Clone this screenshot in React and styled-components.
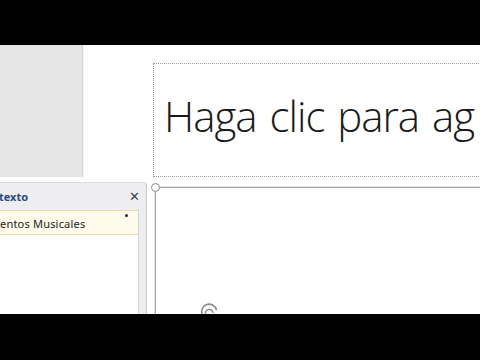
import React from "react";
import styled, { createGlobalStyle } from "styled-components";

const Global = createGlobalStyle`
  html, body { margin: 0; padding: 0; background: #000; }
  #root { width: 480px; height: 360px; overflow: hidden; }
`;

const Frame = styled.div`
  width: 480px;
  height: 360px;
  display: flex;
  flex-direction: column;
  background: #000;
  font-family: "Open Sans", "Noto Sans", sans-serif;
`;

const Letterbox = styled.div`
  height: ${(p) => p.$h}px;
  flex: none;
  background: #000;
`;

const Workspace = styled.div`
  position: relative;
  height: 269px;
  flex: none;
  display: flex;
  background: #fff;
  overflow: hidden;
`;

const ThumbPane = styled.div`
  width: 82px;
  height: 132px;
  flex: none;
  background: #e6e6e6;
  border-right: 1px solid #d6d6d6;
  box-shadow: 1px 0 0 #f2f2f2;
`;

const Canvas = styled.div`
  flex: 1;
  display: flex;
  flex-direction: column;
  padding: 18px 0 0 70px;
  min-width: 0;
`;

const TitleBox = styled.div`
  height: 112px;
  width: 360px;
  flex: none;
  border: 1px dotted #9a9a9a;
  display: flex;
  align-items: center;
  padding-left: 10px;
  box-sizing: content-box;
`;

const TitleText = styled.div`
  font-family: "Open Sans", sans-serif;
  font-weight: 300;
  font-size: 42px;
  color: #1a1a1a;
  white-space: nowrap;
  letter-spacing: -1px;
  word-spacing: 3px;
  margin-top: -9px;
`;

const ContentBox = styled.div`
  position: relative;
  margin-top: 10px;
  margin-left: 2px;
  flex: 1;
  border-top: 1px solid #a9a9a9;
  border-left: 1px solid #a9a9a9;
  box-shadow: 0 -1px 0 #e4e4e4, -1px 0 0 #e4e4e4;
`;

const Handle = styled.div`
  position: absolute;
  left: -5px;
  top: -5px;
  width: 7px;
  height: 7px;
  border: 1.5px solid #8a8a8a;
  border-radius: 50%;
  background: #fff;
`;

const RotateIcon = styled.svg`
  position: absolute;
  left: 42px;
  top: 112px;
`;

const TextPane = styled.div`
  position: absolute;
  left: 0;
  top: 137px;
  width: 146px;
  bottom: -4px;
  background: #eeeef1;
  border-right: 1px solid #c8c8cc;
  border-top: 1px solid #dcdce0;
  border-top-right-radius: 4px;
  display: flex;
  flex-direction: column;
`;

const PaneHeader = styled.div`
  height: 27px;
  flex: none;
  display: flex;
  align-items: center;
  justify-content: space-between;
  padding-right: 6px;
`;

const PaneTitle = styled.span`
  font-family: "Noto Sans", "Open Sans", sans-serif;
  font-weight: 700;
  font-size: 11px;
  color: #2c4a78;
  margin-left: -1px;
`;

const CloseBtn = styled.span`
  font-family: "DejaVu Sans", sans-serif;
  font-size: 13px;
  color: #444;
  line-height: 1;
`;

const PaneBody = styled.div`
  flex: 1;
  width: 138px;
  background: #fff;
  border-right: 1px solid #d4d4d8;
  display: flex;
  flex-direction: column;
`;

const BulletRow = styled.div`
  position: relative;
  height: 25px;
  box-sizing: border-box;
  background: #fffbea;
  border-top: 1px solid #e9dca8;
  border-bottom: 1px solid #e9dca8;
  display: flex;
  align-items: center;
  font-family: "Noto Sans", "Open Sans", sans-serif;
  font-size: 11px;
  letter-spacing: 0.2px;
  color: #222;
  padding-top: 2px;
`;

const Dot = styled.span`
  position: absolute;
  right: 10px;
  top: 3px;
  width: 3px;
  height: 3px;
  border-radius: 50%;
  background: #1c2a4a;
`;

export default function App() {
  return (
    <>
      <Global />
      <Frame>
        <Letterbox $h={45} />
        <Workspace>
          <ThumbPane />
          <Canvas>
            <TitleBox>
              <TitleText>Haga clic para ag</TitleText>
            </TitleBox>
            <ContentBox>
              <Handle />
              <RotateIcon width="24" height="24" viewBox="0 0 24 24">
                <path
                  d="M18.5 10A7.5 7.5 0 1 0 16.5 17"
                  fill="none"
                  stroke="#8a8a8a"
                  strokeWidth="1.6"
                />
                <path
                  d="M15 13A3.8 3.8 0 1 0 13 16.5"
                  fill="none"
                  stroke="#8a8a8a"
                  strokeWidth="1.4"
                />
                <path d="M16 13.5l4.5 2-3.5 3.5z" fill="#8a8a8a" />
              </RotateIcon>
            </ContentBox>
          </Canvas>
          <TextPane>
            <PaneHeader>
              <PaneTitle>texto</PaneTitle>
              <CloseBtn>✕</CloseBtn>
            </PaneHeader>
            <PaneBody>
              <BulletRow>
                entos Musicales
                <Dot />
              </BulletRow>
            </PaneBody>
          </TextPane>
        </Workspace>
        <Letterbox $h={46} />
      </Frame>
    </>
  );
}
